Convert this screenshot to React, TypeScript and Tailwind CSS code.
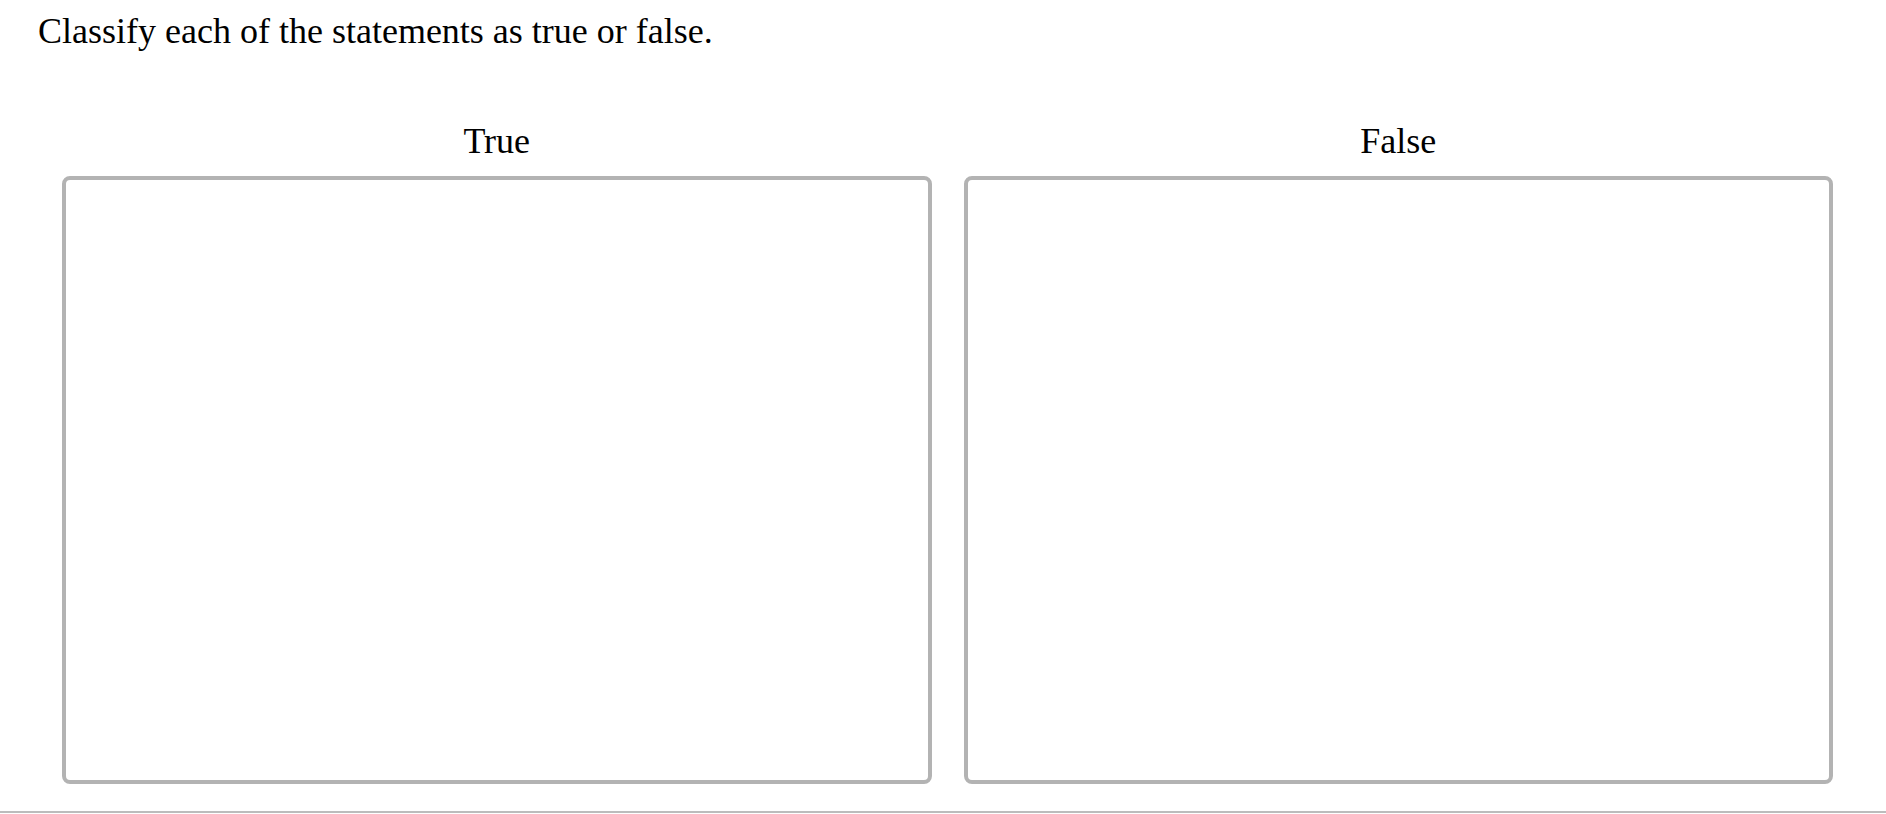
import React from 'react';

const buckets = ['True', 'False'];

export default function App() {
  return (
    <div className="min-h-[814px] w-full bg-white text-black font-['Liberation_Serif','Times_New_Roman',serif]">
      <div className="border-b-2 border-[#bcbcbc] pb-[27px]">
        {/* Prompt */}
        <p className="pl-[38px] pt-[11px] text-[36px] leading-[41px]">
          Classify each of the statements as true or false.
        </p>

        {/* Drop zones */}
        <div className="mt-[69px] grid grid-cols-2 gap-[32px] pl-[62px] pr-[53px]">
          {buckets.map((label) => (
            <div key={label} className="flex flex-col">
              <h3 className="mb-[14px] text-center text-[36px] leading-[41px]">{label}</h3>
              <div className="h-[608px] rounded-[8px] border-4 border-[#b3b3b3] bg-white" />
            </div>
          ))}
        </div>
      </div>
    </div>
  );
}
